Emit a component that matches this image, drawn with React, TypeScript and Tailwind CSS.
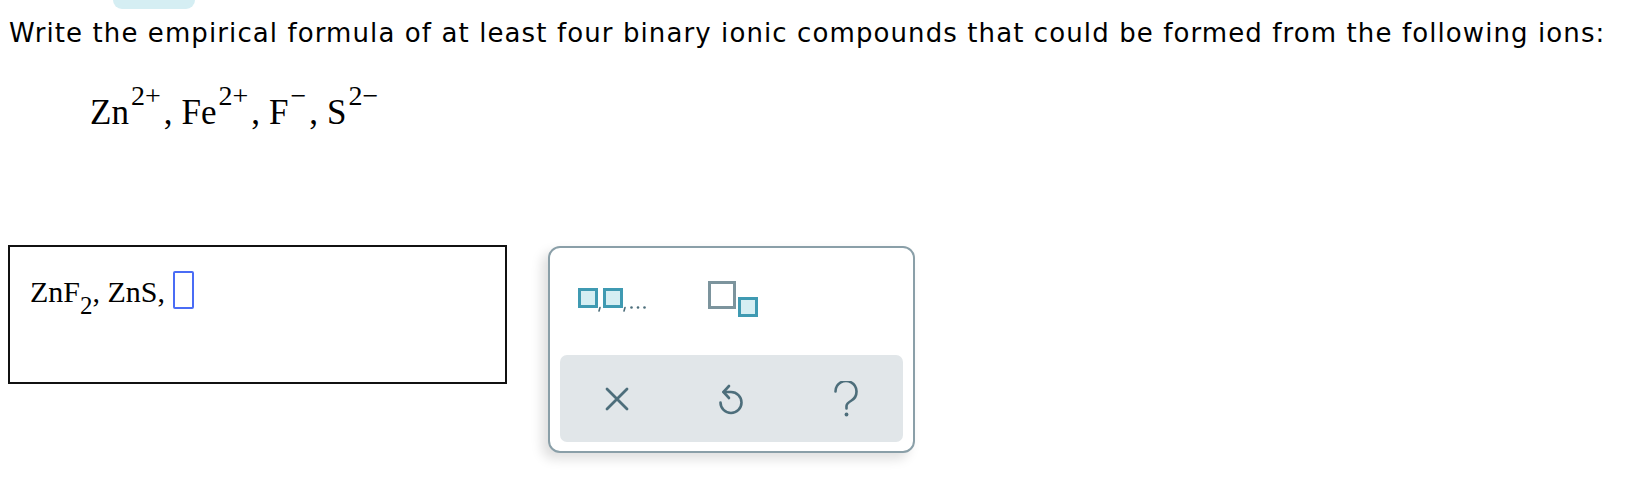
import React from 'react';

const iconColor = '#4d6e7b';

function ListIcon() {
  return (
    <svg width="72" height="24" viewBox="0 0 72 24" fill="none">
      <rect x="1.5" y="1.5" width="17" height="17" fill="#d5eef3" stroke="#3f9ab2" strokeWidth="3" />
      <path d="M22 19.5 L21 23" stroke={iconColor} strokeWidth="1.6" strokeLinecap="round" />
      <rect x="26.5" y="1.5" width="17" height="17" fill="#d5eef3" stroke="#3f9ab2" strokeWidth="3" />
      <path d="M47 19.5 L46 23" stroke={iconColor} strokeWidth="1.6" strokeLinecap="round" />
      <circle cx="53.5" cy="19.5" r="1.3" fill={iconColor} />
      <circle cx="60" cy="19.5" r="1.3" fill={iconColor} />
      <circle cx="66.5" cy="19.5" r="1.3" fill={iconColor} />
    </svg>
  );
}

function SubscriptIcon() {
  return (
    <svg width="51" height="36" viewBox="0 0 51 36" fill="none">
      <rect x="1.5" y="1.5" width="25" height="25" fill="#fff" stroke="#7c949d" strokeWidth="3" />
      <rect x="31.5" y="17.5" width="17" height="17" fill="#d5eef3" stroke="#3f9ab2" strokeWidth="3" />
    </svg>
  );
}

function CloseIcon() {
  return (
    <svg width="24" height="24" viewBox="0 0 24 24" fill="none">
      <path d="M2 2 L22 22 M22 2 L2 22" stroke={iconColor} strokeWidth="2.8" strokeLinecap="round" />
    </svg>
  );
}

function UndoIcon() {
  return (
    <svg width="28" height="32" viewBox="0 0 28 32" fill="none" className="mt-[3px]">
      <path d="M6.5 8 H14 A10.5 10.5 0 1 1 3.5 18.5" stroke={iconColor} strokeWidth="2.6" strokeLinecap="round" />
      <path d="M12 2 L6.5 8 L12 14" stroke={iconColor} strokeWidth="2.6" strokeLinecap="round" strokeLinejoin="round" />
    </svg>
  );
}

function HelpIcon() {
  return (
    <svg width="24" height="36" viewBox="0 0 24 36" fill="none">
      <path d="M1.5 10.5 A10.5 10.5 0 1 1 17.5 19.5 Q12.5 22.5 12.5 25 V27.5" stroke={iconColor} strokeWidth="2.6" strokeLinecap="round" />
      <circle cx="12.5" cy="33.5" r="1.9" fill={iconColor} />
    </svg>
  );
}

function Sup({ children }: { children: React.ReactNode }) {
  return <span className="relative -top-[19px] ml-[2px] text-[28px]">{children}</span>;
}

function Comma() {
  return <span className="ml-[3px] mr-[9px]">,</span>;
}

export default function App() {
  return (
    <div className="w-[1648px] h-[500px] bg-white overflow-hidden">
      <div className="ml-[113px] h-[9px] w-[82px] rounded-b-[10px] bg-[#d5eef3]" />

      <p className="ml-[9px] mt-[9px] text-[26px] leading-[30px] tracking-[1.1px] font-['DejaVu_Sans',sans-serif] text-black whitespace-nowrap">
        Write the empirical formula of at least four binary ionic compounds that could be formed from the following ions:
      </p>

      <div className="ml-[90px] mt-[45px] text-[35px] leading-[40px] font-['Liberation_Serif',serif] text-black whitespace-nowrap">
        Zn<Sup>2+</Sup>
        <Comma />
        Fe<Sup>2+</Sup>
        <Comma />
        F<Sup>−</Sup>
        <Comma />
        S<Sup>2−</Sup>
      </div>

      <div className="flex items-start mt-[110px]">
        <div className="ml-[8px] w-[499px] h-[139px] border-2 border-[#111] pl-[20px] pt-[24px]">
          <div className="text-[30px] leading-[36px] font-['Liberation_Serif',serif] text-black whitespace-nowrap">
            ZnF<span className="relative top-[12px] text-[25px]">2</span>, ZnS,{' '}
            <span className="inline-block w-[21px] h-[38px] border-2 border-[#4a6cf5] rounded-[2px] align-[-7px]" />
          </div>
        </div>

        <div className="ml-[41px] mt-[1px] w-[367px] h-[207px] rounded-[12px] border-2 border-[#8a9fa8] bg-white shadow-[-6px_6px_12px_rgba(0,0,0,0.13)] flex flex-col">
          <div className="flex-1 flex items-start pt-[33px] pl-[28px]">
            <div className="mt-[7px]">
              <ListIcon />
            </div>
            <div className="ml-[58px]">
              <SubscriptIcon />
            </div>
          </div>
          <div className="mx-[10px] mb-[9px] h-[87px] rounded-[7px] bg-[#e1e6e9] grid grid-cols-3 items-center justify-items-center">
            <CloseIcon />
            <UndoIcon />
            <HelpIcon />
          </div>
        </div>
      </div>
    </div>
  );
}
